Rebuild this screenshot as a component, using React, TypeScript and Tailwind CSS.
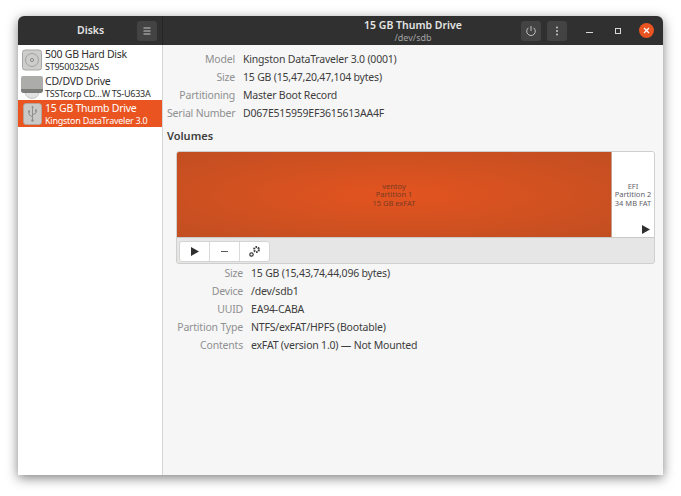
import React from "react";

const driveRows = [
  ["Model", "Kingston DataTraveler 3.0 (0001)"],
  ["Size", "15 GB (15,47,20,47,104 bytes)"],
  ["Partitioning", "Master Boot Record"],
  ["Serial Number", "D067E515959EF3615613AA4F"],
];
const volRows = [
  ["Size", "15 GB (15,43,74,44,096 bytes)"],
  ["Device", "/dev/sdb1"],
  ["UUID", "EA94-CABA"],
  ["Partition Type", "NTFS/exFAT/HPFS (Bootable)"],
  ["Contents", "exFAT (version 1.0) — Not Mounted"],
];

function HddIcon() {
  return (
    <svg width="22" height="24" viewBox="0 0 22 24">
      <rect x="1.5" y="2" width="19" height="20" rx="2.5" fill="#cdcdcb" stroke="#a5a5a3" />
      <circle cx="11" cy="12" r="6.5" fill="none" stroke="#a0a09e" strokeWidth="1" />
      <circle cx="11" cy="12" r="1.6" fill="none" stroke="#8a8a88" strokeWidth="1" />
    </svg>
  );
}
function OpticalIcon() {
  return (
    <svg width="24" height="26" viewBox="0 0 24 26">
      <path d="M5 18a7 6.5 0 0 0 14 0z" fill="#e2e2e2" stroke="#a8a8a8" strokeWidth="0.6" />
      <path d="M3 2h18a2 2 0 0 1 2 2v12a3 3 0 0 1-3 3H4a3 3 0 0 1-3-3V4a2 2 0 0 1 2-2z" fill="#acacaa" />
      <path d="M1 15h22v1a3 3 0 0 1-3 3H4a3 3 0 0 1-3-3z" fill="#7c7c7a" />
    </svg>
  );
}
function UsbIcon() {
  return (
    <svg width="19" height="24" viewBox="0 0 19 24">
      <rect x="0.5" y="1.5" width="18" height="21" rx="2.5" fill="#c9c9c7" stroke="#a8a8a6" strokeWidth="0.8" />
      <path d="M9.5 5v13M9.5 15l-3.5-2.5V10M9.5 13l3.5-2V9" fill="none" stroke="#8f8f8d" strokeWidth="1" />
      <path d="M9.5 3.5l-1.3 2.2h2.6z" fill="#8f8f8d" />
      <circle cx="9.5" cy="18.5" r="1.3" fill="#8f8f8d" />
      <rect x="5" y="8.5" width="2" height="2" fill="#8f8f8d" />
      <rect x="12" y="7.5" width="2" height="2" fill="#8f8f8d" />
    </svg>
  );
}

function InfoRows({ rows, labelW }: { rows: string[][]; labelW: string }) {
  return (
    <div className="flex flex-col">
      {rows.map(([k, v]) => (
        <div key={k} className="flex h-[18px] items-center gap-[8px] text-[10.5px] leading-[18px] tracking-[-0.2px]">
          <span className={`${labelW} text-right text-[#8f9091] whitespace-nowrap`}>{k}</span>
          <span className="text-[#3d3d3d] whitespace-nowrap">{v}</span>
        </div>
      ))}
    </div>
  );
}

function SideItem({ icon, title, sub, active }: { icon: React.ReactNode; title: string; sub: string; active?: boolean }) {
  return (
    <div className={`flex h-[27px] items-center ${active ? "bg-[#e95420] text-white" : "text-[#2e2e2e]"}`}>
      <div className="flex w-[27px] shrink-0 justify-center pl-[1px]">{icon}</div>
      <div className="flex flex-col">
        <span className="text-[10.5px] leading-[14px] tracking-[-0.25px] whitespace-nowrap">{title}</span>
        <span className="text-[9px] leading-[12px] tracking-[-0.25px] whitespace-nowrap">{sub}</span>
      </div>
    </div>
  );
}

export default function App() {
  return (
    <div
      className="h-[496px] w-[681px] overflow-hidden bg-white pl-[18px] pt-[16px]"
      style={{ fontFamily: '"Noto Sans", "Open Sans", sans-serif' }}
    >
      <div className="flex h-[459px] w-[645px] flex-col overflow-hidden rounded-t-[6px] shadow-[0_3px_12px_rgba(0,0,0,0.5)]">
        <header className="flex h-[29px] shrink-0 bg-[#303030] text-[#e4e4e4]">
          <div className="flex w-[145px] shrink-0 items-center border-r border-[#252525] pl-[59px]">
            <span className="w-[60px] text-[10.5px] font-semibold">Disks</span>
            <div className="flex h-[20px] w-[20px] items-center justify-center rounded-[3px] bg-[#434343]">
              <svg width="10" height="10" viewBox="0 0 10 10">
                <path d="M1.5 2h7M1.5 5h7M1.5 8h7" stroke="#c8c8c8" strokeWidth="1" />
              </svg>
            </div>
          </div>
          <div className="flex flex-1 items-center">
            <div className="flex w-[358px] flex-col items-center pl-[142px]">
              <span className="text-[10.5px] font-semibold leading-[14px] whitespace-nowrap">15 GB Thumb Drive</span>
              <span className="text-[9px] leading-[11px] text-[#a4a4a4]">/dev/sdb</span>
            </div>
            <div className="flex h-[20px] w-[20px] items-center justify-center rounded-[3px] bg-[#434343]">
              <svg width="12" height="12" viewBox="0 0 12 12" fill="none">
                <path d="M3.4 2.8a4.3 4.3 0 1 0 5.2 0M6 1v5" stroke="#c0c0c0" strokeWidth="1" />
              </svg>
            </div>
            <div className="ml-[6px] flex h-[20px] w-[20px] items-center justify-center rounded-[3px] bg-[#434343]">
              <svg width="10" height="12" viewBox="0 0 10 12">
                <circle cx="5" cy="2.5" r="1" fill="#c8c8c8" />
                <circle cx="5" cy="6" r="1" fill="#c8c8c8" />
                <circle cx="5" cy="9.5" r="1" fill="#c8c8c8" />
              </svg>
            </div>
            <div className="ml-[18px] flex h-[20px] w-[8px] items-center justify-center">
              <div className="mt-[4px] h-[1px] w-[7px] bg-[#d8d8d8]" />
            </div>
            <div className="ml-[22px] h-[6px] w-[6px] border border-[#d8d8d8]" />
            <div className="ml-[18px] flex h-[15px] w-[15px] items-center justify-center rounded-full bg-[#e95420]">
              <svg width="7" height="7" viewBox="0 0 7 7">
                <path d="M1 1l5 5M6 1l-5 5" stroke="#fff" strokeWidth="1.2" />
              </svg>
            </div>
          </div>
        </header>
        <div className="flex min-h-0 flex-1">
          <aside className="flex w-[145px] shrink-0 flex-col border-r border-[#d6d6d6] bg-white pt-[1px]">
            <SideItem icon={<HddIcon />} title="500 GB Hard Disk" sub="ST9500325AS" />
            <SideItem icon={<OpticalIcon />} title="CD/DVD Drive" sub="TSSTcorp CD…W TS-U633A" />
            <SideItem icon={<UsbIcon />} title="15 GB Thumb Drive" sub="Kingston DataTraveler 3.0" active />
          </aside>
          <main className="flex min-w-0 flex-1 flex-col bg-[#f6f6f6] pl-[4px] pt-[5px]">
            <InfoRows rows={driveRows} labelW="w-[68px]" />
            <div className="mt-[7px] text-[11px] font-semibold leading-[14px] text-[#3d3d3d]">Volumes</div>
            <div className="ml-[9px] mt-[8px] w-[479px] overflow-hidden rounded-[3px] border border-[#cfcfcd] bg-[#e6e6e6]">
              <div className="flex h-[86px] border-b border-[#c9c9c7]">
                <div className="flex w-[434px] flex-col items-center justify-center bg-[radial-gradient(ellipse_at_center,#e35420_0%,#c14e21_100%)] text-center text-[7.5px] leading-[8.5px] text-[#7a3a20]">
                  <span>ventoy</span>
                  <span>Partition 1</span>
                  <span>15 GB exFAT</span>
                </div>
                <div className="relative flex flex-1 flex-col items-center justify-center border-l border-[#c4a08e] bg-white text-center text-[7.5px] leading-[8.5px] text-[#5f6168]">
                  <span>EFI</span>
                  <span>Partition 2</span>
                  <span>34 MB FAT</span>
                  <svg className="absolute bottom-[3px] right-[4px]" width="8" height="9" viewBox="0 0 8 9">
                    <path d="M0 0l8 4.5L0 9z" fill="#2f2f2f" />
                  </svg>
                </div>
              </div>
              <div className="flex h-[25px] items-start pl-[2px] pt-[3px]">
                <div className="flex h-[21px] overflow-hidden rounded-[3px] border border-[#d4d4d2] bg-white">
                  <div className="flex w-[30px] items-center justify-center border-r border-[#dadad8]">
                    <svg width="8" height="9" viewBox="0 0 8 9">
                      <path d="M0 0l8 4.5L0 9z" fill="#2f2f2f" />
                    </svg>
                  </div>
                  <div className="flex w-[30px] items-center justify-center border-r border-[#dadad8]">
                    <div className="h-[1px] w-[7px] bg-[#5a5a5a]" />
                  </div>
                  <div className="flex w-[29px] items-center justify-center">
                    <svg width="13" height="13" viewBox="0 0 13 13" fill="none">
                      <circle cx="8.5" cy="4.5" r="2.4" stroke="#3c3c3c" strokeWidth="2" strokeDasharray="1.5 0.8" />
                      <circle cx="3.5" cy="9.5" r="1.7" stroke="#3c3c3c" strokeWidth="1.2" />
                    </svg>
                  </div>
                </div>
              </div>
            </div>
            <div>
              <InfoRows rows={volRows} labelW="w-[76px]" />
            </div>
          </main>
        </div>
      </div>
    </div>
  );
}
